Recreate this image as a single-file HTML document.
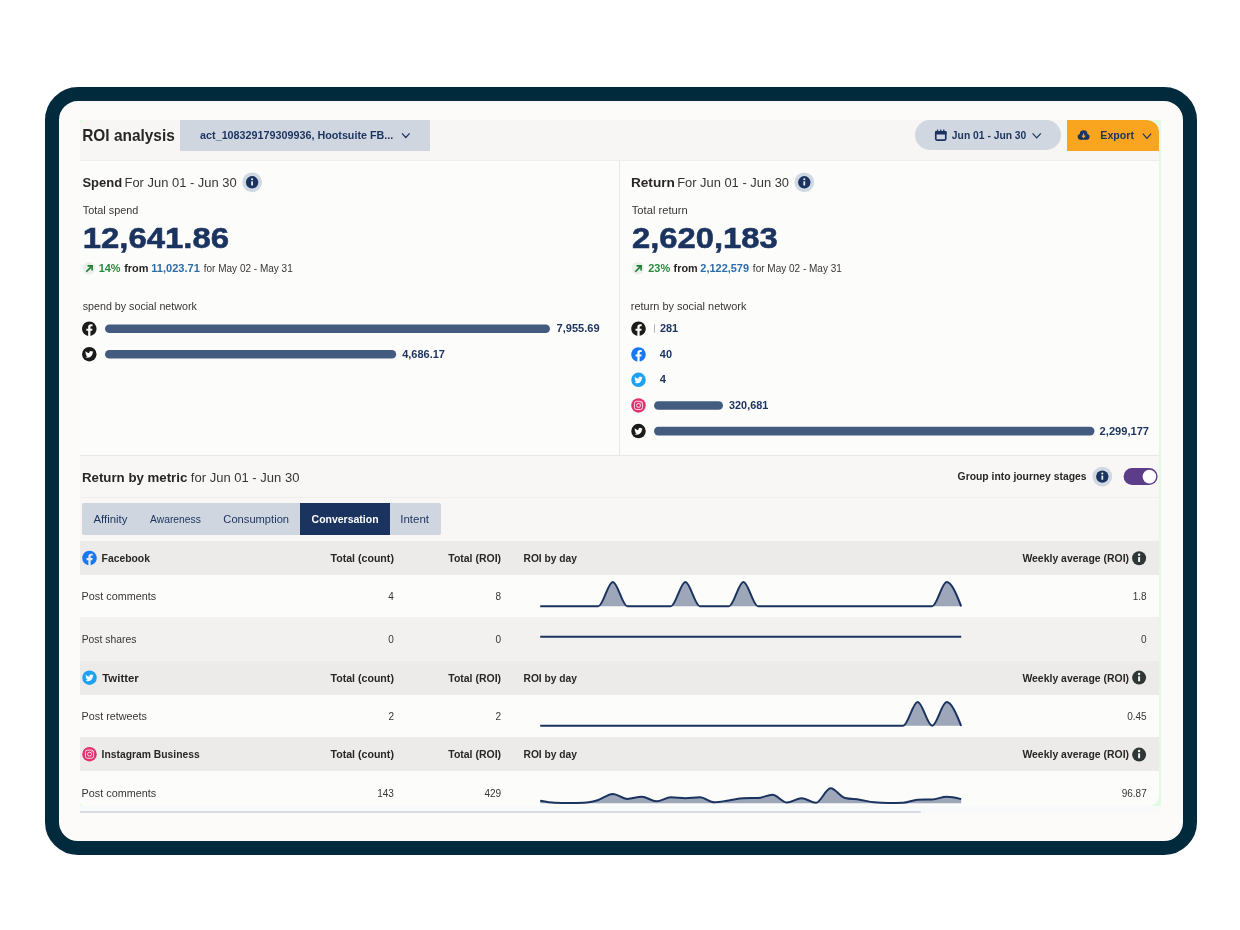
<!DOCTYPE html>
<html><head><meta charset="utf-8"><title>ROI analysis</title>
<style>
html,body{margin:0;padding:0;background:#fff;}
body{width:1240px;height:930px;position:relative;overflow:hidden;font-family:"Liberation Sans", sans-serif;}
.a{position:absolute;}
.t{position:absolute;white-space:pre;line-height:1;transform-origin:0 0;font-family:"Liberation Sans", sans-serif;}
</style></head><body>
<div class="a" style="left:45px;top:87px;width:1124px;height:739.5px;border:14px solid #012b3d;border-radius:33px;background:#fcfbf9;"></div>
<div class="a" style="left:80px;top:120px;width:1081px;height:686px;background:#e0fbe0;"></div>
<div class="a" style="left:80px;top:120px;width:1079px;height:686px;background:#fcfcfa;border-radius:5px 12px 11px 4px;overflow:hidden;">
 <div class="a" style="left:0;top:0;width:1079px;height:40px;background:#f7f6f4;"></div>
 <div class="a" style="left:0;top:40px;width:1079px;height:1px;background:#efeeec;"></div>
 <div class="a" style="left:100px;top:0;width:250px;height:30.8px;background:#cfd6e0;"></div>
 <div class="a" style="left:835px;top:0;width:146px;height:30.2px;background:#d0d7e0;border-radius:16px;"></div>
 <div class="a" style="left:987px;top:0;width:92px;height:30.7px;background:#f9a51f;border-radius:0 12px 0 0;"></div>
 <div class="a" style="left:539px;top:41px;width:1px;height:295px;background:#e9e8e6;"></div>
 <div class="a" style="left:0;top:335px;width:1079px;height:86px;background:#f8f7f5;"></div>
 <div class="a" style="left:0;top:335px;width:1079px;height:1px;background:#e9e8e6;"></div>
 <div class="a" style="left:0;top:377px;width:1079px;height:1px;background:#f0efed;"></div>
 <div class="a" style="left:2px;top:383px;width:359px;height:31.5px;background:#cfd6e0;border-radius:2px;"></div>
 <div class="a" style="left:219.7px;top:383px;width:90.3px;height:31.5px;background:#1b335f;"></div>
 <div class="a" style="left:0;top:420.6px;width:1079px;height:34px;background:#ecebe9;"></div>
 <div class="a" style="left:0;top:497.3px;width:1079px;height:43.3px;background:#f2f1ef;"></div>
 <div class="a" style="left:0;top:540.6px;width:1079px;height:34px;background:#ecebe9;"></div>
 <div class="a" style="left:0;top:617.4px;width:1079px;height:34px;background:#ecebe9;"></div>
</div>
<div class="a" style="left:80px;top:805.5px;width:1081px;height:7px;background:#f8f9fb;"></div>
<div class="a" style="left:80px;top:810.6px;width:841px;height:2px;background:#d8dce2;border-radius:0 2px 2px 0;"></div>
<svg class="a" style="left:0;top:0;will-change:transform" width="1240" height="930" viewBox="0 0 1240 930">
<rect x="105" y="324.40" width="445.00" height="8.6" rx="4.3" fill="#445b80"/>
<rect x="105" y="350.00" width="291.20" height="8.6" rx="4.3" fill="#445b80"/>
<rect x="654" y="401.20" width="69.00" height="8.6" rx="4.3" fill="#445b80"/>
<rect x="654" y="426.80" width="440.50" height="8.6" rx="4.3" fill="#445b80"/>
<rect x="654.15" y="324.3" width="0.8" height="8.4" fill="#98a2b6"/>
<g transform="translate(82.05,321.45) scale(0.6042)"><path d="M24 12.073c0-6.627-5.373-12-12-12s-12 5.373-12 12c0 5.99 4.388 10.954 10.125 11.854v-8.385H7.078v-3.47h3.047V9.43c0-3.007 1.792-4.669 4.533-4.669 1.312 0 2.686.235 2.686.235v2.953H15.83c-1.491 0-1.956.925-1.956 1.874v2.25h3.328l-.532 3.47h-2.796v8.385C19.612 23.027 24 18.062 24 12.073z" fill="#1c1b1b"/></g>
<circle cx="89.3" cy="354.2" r="7.25" fill="#1c1b1b"/><g transform="translate(85.09,350.14) scale(0.3504)"><path d="M23.953 4.57a10 10 0 01-2.825.775 4.958 4.958 0 002.163-2.723c-.951.555-2.005.959-3.127 1.184a4.92 4.92 0 00-8.384 4.482C7.69 8.095 4.067 6.13 1.64 3.162a4.822 4.822 0 00-.666 2.475c0 1.71.87 3.213 2.188 4.096a4.904 4.904 0 01-2.228-.616v.06a4.923 4.923 0 003.946 4.827 4.996 4.996 0 01-2.212.085 4.936 4.936 0 004.604 3.417 9.867 9.867 0 01-6.102 2.105c-.39 0-.779-.023-1.17-.067a13.995 13.995 0 007.557 2.209c9.053 0 13.998-7.496 13.998-13.985 0-.21 0-.42-.015-.63A9.935 9.935 0 0024 4.59z" fill="#fff"/></g>
<g transform="translate(631.25,321.35) scale(0.6042)"><path d="M24 12.073c0-6.627-5.373-12-12-12s-12 5.373-12 12c0 5.99 4.388 10.954 10.125 11.854v-8.385H7.078v-3.47h3.047V9.43c0-3.007 1.792-4.669 4.533-4.669 1.312 0 2.686.235 2.686.235v2.953H15.83c-1.491 0-1.956.925-1.956 1.874v2.25h3.328l-.532 3.47h-2.796v8.385C19.612 23.027 24 18.062 24 12.073z" fill="#1c1b1b"/></g>
<g transform="translate(631.25,347.15) scale(0.6042)"><path d="M24 12.073c0-6.627-5.373-12-12-12s-12 5.373-12 12c0 5.99 4.388 10.954 10.125 11.854v-8.385H7.078v-3.47h3.047V9.43c0-3.007 1.792-4.669 4.533-4.669 1.312 0 2.686.235 2.686.235v2.953H15.83c-1.491 0-1.956.925-1.956 1.874v2.25h3.328l-.532 3.47h-2.796v8.385C19.612 23.027 24 18.062 24 12.073z" fill="#1877f2"/></g>
<circle cx="638.5" cy="379.8" r="7.25" fill="#1da1f2"/><g transform="translate(634.29,375.74) scale(0.3504)"><path d="M23.953 4.57a10 10 0 01-2.825.775 4.958 4.958 0 002.163-2.723c-.951.555-2.005.959-3.127 1.184a4.92 4.92 0 00-8.384 4.482C7.69 8.095 4.067 6.13 1.64 3.162a4.822 4.822 0 00-.666 2.475c0 1.71.87 3.213 2.188 4.096a4.904 4.904 0 01-2.228-.616v.06a4.923 4.923 0 003.946 4.827 4.996 4.996 0 01-2.212.085 4.936 4.936 0 004.604 3.417 9.867 9.867 0 01-6.102 2.105c-.39 0-.779-.023-1.17-.067a13.995 13.995 0 007.557 2.209c9.053 0 13.998-7.496 13.998-13.985 0-.21 0-.42-.015-.63A9.935 9.935 0 0024 4.59z" fill="#fff"/></g>
<circle cx="638.5" cy="405.4" r="7.25" fill="#e0306f"/><rect x="634.4" y="401.29999999999995" width="8.2" height="8.2" rx="2.2" fill="none" stroke="#fff" stroke-width="0.9" stroke-opacity="0.9"/><circle cx="638.5" cy="405.4" r="2" fill="none" stroke="#fff" stroke-width="0.9" stroke-opacity="0.9"/><circle cx="641.0" cy="402.9" r="0.55" fill="#fff"/>
<circle cx="638.5" cy="431.1" r="7.25" fill="#1c1b1b"/><g transform="translate(634.29,427.04) scale(0.3504)"><path d="M23.953 4.57a10 10 0 01-2.825.775 4.958 4.958 0 002.163-2.723c-.951.555-2.005.959-3.127 1.184a4.92 4.92 0 00-8.384 4.482C7.69 8.095 4.067 6.13 1.64 3.162a4.822 4.822 0 00-.666 2.475c0 1.71.87 3.213 2.188 4.096a4.904 4.904 0 01-2.228-.616v.06a4.923 4.923 0 003.946 4.827 4.996 4.996 0 01-2.212.085 4.936 4.936 0 004.604 3.417 9.867 9.867 0 01-6.102 2.105c-.39 0-.779-.023-1.17-.067a13.995 13.995 0 007.557 2.209c9.053 0 13.998-7.496 13.998-13.985 0-.21 0-.42-.015-.63A9.935 9.935 0 0024 4.59z" fill="#fff"/></g>
<g transform="translate(82.25,550.75) scale(0.6042)"><path d="M24 12.073c0-6.627-5.373-12-12-12s-12 5.373-12 12c0 5.99 4.388 10.954 10.125 11.854v-8.385H7.078v-3.47h3.047V9.43c0-3.007 1.792-4.669 4.533-4.669 1.312 0 2.686.235 2.686.235v2.953H15.83c-1.491 0-1.956.925-1.956 1.874v2.25h3.328l-.532 3.47h-2.796v8.385C19.612 23.027 24 18.062 24 12.073z" fill="#1877f2"/></g>
<circle cx="89.5" cy="677.7" r="7.25" fill="#1da1f2"/><g transform="translate(85.30,673.64) scale(0.3504)"><path d="M23.953 4.57a10 10 0 01-2.825.775 4.958 4.958 0 002.163-2.723c-.951.555-2.005.959-3.127 1.184a4.92 4.92 0 00-8.384 4.482C7.69 8.095 4.067 6.13 1.64 3.162a4.822 4.822 0 00-.666 2.475c0 1.71.87 3.213 2.188 4.096a4.904 4.904 0 01-2.228-.616v.06a4.923 4.923 0 003.946 4.827 4.996 4.996 0 01-2.212.085 4.936 4.936 0 004.604 3.417 9.867 9.867 0 01-6.102 2.105c-.39 0-.779-.023-1.17-.067a13.995 13.995 0 007.557 2.209c9.053 0 13.998-7.496 13.998-13.985 0-.21 0-.42-.015-.63A9.935 9.935 0 0024 4.59z" fill="#fff"/></g>
<circle cx="89.5" cy="754.2" r="7.25" fill="#e0306f"/><rect x="85.4" y="750.1" width="8.2" height="8.2" rx="2.2" fill="none" stroke="#fff" stroke-width="0.9" stroke-opacity="0.9"/><circle cx="89.5" cy="754.2" r="2" fill="none" stroke="#fff" stroke-width="0.9" stroke-opacity="0.9"/><circle cx="92.0" cy="751.7" r="0.55" fill="#fff"/>
<circle cx="252.1" cy="182.3" r="9.9" fill="#d0d8e3"/><circle cx="252.1" cy="182.3" r="6.2" fill="#1b335f"/><rect x="251.2" y="181.20000000000002" width="1.8" height="4.3" rx="0.5" fill="#e8ecf2"/><circle cx="252.1" cy="179.20000000000002" r="1.05" fill="#e8ecf2"/>
<circle cx="804.3" cy="182.3" r="9.9" fill="#d0d8e3"/><circle cx="804.3" cy="182.3" r="6.2" fill="#1b335f"/><rect x="803.4" y="181.20000000000002" width="1.8" height="4.3" rx="0.5" fill="#e8ecf2"/><circle cx="804.3" cy="179.20000000000002" r="1.05" fill="#e8ecf2"/>
<circle cx="1102.3" cy="476.6" r="9.9" fill="#d0d8e3"/><circle cx="1102.3" cy="476.6" r="6.2" fill="#1b335f"/><rect x="1101.3999999999999" y="475.5" width="1.8" height="4.3" rx="0.5" fill="#e8ecf2"/><circle cx="1102.3" cy="473.5" r="1.05" fill="#e8ecf2"/>
<circle cx="1139.1" cy="558.3" r="7" fill="#2f3638"/><rect x="1138.1" y="557.0" width="2" height="5" rx="0.4" fill="#f0f0ee"/><circle cx="1139.1" cy="554.6999999999999" r="1.2" fill="#f0f0ee"/>
<circle cx="1139.1" cy="677.6" r="7" fill="#2f3638"/><rect x="1138.1" y="676.3000000000001" width="2" height="5" rx="0.4" fill="#f0f0ee"/><circle cx="1139.1" cy="674.0" r="1.2" fill="#f0f0ee"/>
<circle cx="1139.1" cy="754.6" r="7" fill="#2f3638"/><rect x="1138.1" y="753.3000000000001" width="2" height="5" rx="0.4" fill="#f0f0ee"/><circle cx="1139.1" cy="751.0" r="1.2" fill="#f0f0ee"/>
<circle cx="89" cy="268.3" r="6.3" fill="#e9efeb"/><path d="M86.3,271.8L91.4,266.6" stroke="#1e7a2e" stroke-width="1.6" fill="none"/><path d="M87.6,265.90000000000003H92.1V270.40000000000003" stroke="#1e7a2e" stroke-width="1.6" fill="none"/>
<circle cx="638" cy="268.3" r="6.3" fill="#e9efeb"/><path d="M635.3,271.8L640.4,266.6" stroke="#1e7a2e" stroke-width="1.6" fill="none"/><path d="M636.6,265.90000000000003H641.1V270.40000000000003" stroke="#1e7a2e" stroke-width="1.6" fill="none"/>
<path d="M402,133.31L405.8,137.49L409.6,133.31" stroke="#1b335f" stroke-width="1.2" fill="none"/>
<path d="M1032.6,133.34L1036.6999999999998,137.86L1040.8,133.34" stroke="#1b335f" stroke-width="1.2" fill="none"/>
<path d="M1142.8,133.72L1146.9499999999998,138.28L1151.1,133.72" stroke="#1b335f" stroke-width="1.2" fill="none"/>
<rect x="935.75" y="131.85" width="10" height="8.2" rx="1.2" fill="none" stroke="#1b335f" stroke-width="1.7"/><rect x="935" y="131" width="11.6" height="3.5" rx="0.8" fill="#1b335f"/><rect x="936.9" y="129.6" width="1.3" height="2" fill="#1b335f"/><rect x="940.1" y="129.6" width="1.3" height="2" fill="#1b335f"/><rect x="943.1" y="129.6" width="1.3" height="2" fill="#1b335f"/>
<g fill="#1b335f"><circle cx="1080.5" cy="136.85" r="2.85"/><circle cx="1086.7" cy="136.85" r="2.85"/><circle cx="1083.6" cy="134" r="3.85"/><rect x="1080.5" y="134" width="6.2" height="5.7"/></g><path d="M1083.6,133.4v3.6M1081.9,135.7l1.7,1.7l1.7,-1.7" stroke="#f9a51f" stroke-width="1.15" fill="none"/>
<rect x="1123.6" y="468.1" width="34" height="17" rx="8.5" fill="#5c3d8a"/><circle cx="1149.4" cy="476.6" r="6.8" fill="#fff"/>
<path d="M540.20,606.30C545.04,606.30 549.88,606.30 554.72,606.30C559.56,606.30 564.40,606.30 569.23,606.30C574.07,606.30 578.91,606.30 583.75,606.30C588.59,606.30 593.43,606.30 598.27,606.30C603.11,606.30 607.95,582.00 612.79,582.00C617.62,582.00 622.46,606.30 627.30,606.30C632.14,606.30 636.98,606.30 641.82,606.30C646.66,606.30 651.50,606.30 656.34,606.30C661.18,606.30 666.01,606.30 670.85,606.30C675.69,606.30 680.53,582.00 685.37,582.00C690.21,582.00 695.05,606.30 699.89,606.30C704.73,606.30 709.57,606.30 714.40,606.30C719.24,606.30 724.08,606.30 728.92,606.30C733.76,606.30 738.60,582.00 743.44,582.00C748.28,582.00 753.12,606.30 757.96,606.30C762.79,606.30 767.63,606.30 772.47,606.30C777.31,606.30 782.15,606.30 786.99,606.30C791.83,606.30 796.67,606.30 801.51,606.30C806.35,606.30 811.18,606.30 816.02,606.30C820.86,606.30 825.70,606.30 830.54,606.30C835.38,606.30 840.22,606.30 845.06,606.30C849.90,606.30 854.74,606.30 859.57,606.30C864.41,606.30 869.25,606.30 874.09,606.30C878.93,606.30 883.77,606.30 888.61,606.30C893.45,606.30 898.29,606.30 903.12,606.30C907.96,606.30 912.80,606.30 917.64,606.30C922.48,606.30 927.32,606.30 932.16,606.30C937.00,606.30 941.84,582.00 946.68,582.00C951.51,582.00 956.35,594.15 961.19,606.30L961.19,606.30L540.20,606.30Z" fill="#1b335f" fill-opacity="0.42"/><path d="M540.20,606.30C545.04,606.30 549.88,606.30 554.72,606.30C559.56,606.30 564.40,606.30 569.23,606.30C574.07,606.30 578.91,606.30 583.75,606.30C588.59,606.30 593.43,606.30 598.27,606.30C603.11,606.30 607.95,582.00 612.79,582.00C617.62,582.00 622.46,606.30 627.30,606.30C632.14,606.30 636.98,606.30 641.82,606.30C646.66,606.30 651.50,606.30 656.34,606.30C661.18,606.30 666.01,606.30 670.85,606.30C675.69,606.30 680.53,582.00 685.37,582.00C690.21,582.00 695.05,606.30 699.89,606.30C704.73,606.30 709.57,606.30 714.40,606.30C719.24,606.30 724.08,606.30 728.92,606.30C733.76,606.30 738.60,582.00 743.44,582.00C748.28,582.00 753.12,606.30 757.96,606.30C762.79,606.30 767.63,606.30 772.47,606.30C777.31,606.30 782.15,606.30 786.99,606.30C791.83,606.30 796.67,606.30 801.51,606.30C806.35,606.30 811.18,606.30 816.02,606.30C820.86,606.30 825.70,606.30 830.54,606.30C835.38,606.30 840.22,606.30 845.06,606.30C849.90,606.30 854.74,606.30 859.57,606.30C864.41,606.30 869.25,606.30 874.09,606.30C878.93,606.30 883.77,606.30 888.61,606.30C893.45,606.30 898.29,606.30 903.12,606.30C907.96,606.30 912.80,606.30 917.64,606.30C922.48,606.30 927.32,606.30 932.16,606.30C937.00,606.30 941.84,582.00 946.68,582.00C951.51,582.00 956.35,594.15 961.19,606.30" fill="none" stroke="#1b335f" stroke-width="2" stroke-linejoin="round"/><path d="M540.20,636.80C545.04,636.80 549.88,636.80 554.72,636.80C559.56,636.80 564.40,636.80 569.23,636.80C574.07,636.80 578.91,636.80 583.75,636.80C588.59,636.80 593.43,636.80 598.27,636.80C603.11,636.80 607.95,636.80 612.79,636.80C617.62,636.80 622.46,636.80 627.30,636.80C632.14,636.80 636.98,636.80 641.82,636.80C646.66,636.80 651.50,636.80 656.34,636.80C661.18,636.80 666.01,636.80 670.85,636.80C675.69,636.80 680.53,636.80 685.37,636.80C690.21,636.80 695.05,636.80 699.89,636.80C704.73,636.80 709.57,636.80 714.40,636.80C719.24,636.80 724.08,636.80 728.92,636.80C733.76,636.80 738.60,636.80 743.44,636.80C748.28,636.80 753.12,636.80 757.96,636.80C762.79,636.80 767.63,636.80 772.47,636.80C777.31,636.80 782.15,636.80 786.99,636.80C791.83,636.80 796.67,636.80 801.51,636.80C806.35,636.80 811.18,636.80 816.02,636.80C820.86,636.80 825.70,636.80 830.54,636.80C835.38,636.80 840.22,636.80 845.06,636.80C849.90,636.80 854.74,636.80 859.57,636.80C864.41,636.80 869.25,636.80 874.09,636.80C878.93,636.80 883.77,636.80 888.61,636.80C893.45,636.80 898.29,636.80 903.12,636.80C907.96,636.80 912.80,636.80 917.64,636.80C922.48,636.80 927.32,636.80 932.16,636.80C937.00,636.80 941.84,636.80 946.68,636.80C951.51,636.80 956.35,636.80 961.19,636.80L961.19,636.80L540.20,636.80Z" fill="#1b335f" fill-opacity="0.42"/><path d="M540.20,636.80C545.04,636.80 549.88,636.80 554.72,636.80C559.56,636.80 564.40,636.80 569.23,636.80C574.07,636.80 578.91,636.80 583.75,636.80C588.59,636.80 593.43,636.80 598.27,636.80C603.11,636.80 607.95,636.80 612.79,636.80C617.62,636.80 622.46,636.80 627.30,636.80C632.14,636.80 636.98,636.80 641.82,636.80C646.66,636.80 651.50,636.80 656.34,636.80C661.18,636.80 666.01,636.80 670.85,636.80C675.69,636.80 680.53,636.80 685.37,636.80C690.21,636.80 695.05,636.80 699.89,636.80C704.73,636.80 709.57,636.80 714.40,636.80C719.24,636.80 724.08,636.80 728.92,636.80C733.76,636.80 738.60,636.80 743.44,636.80C748.28,636.80 753.12,636.80 757.96,636.80C762.79,636.80 767.63,636.80 772.47,636.80C777.31,636.80 782.15,636.80 786.99,636.80C791.83,636.80 796.67,636.80 801.51,636.80C806.35,636.80 811.18,636.80 816.02,636.80C820.86,636.80 825.70,636.80 830.54,636.80C835.38,636.80 840.22,636.80 845.06,636.80C849.90,636.80 854.74,636.80 859.57,636.80C864.41,636.80 869.25,636.80 874.09,636.80C878.93,636.80 883.77,636.80 888.61,636.80C893.45,636.80 898.29,636.80 903.12,636.80C907.96,636.80 912.80,636.80 917.64,636.80C922.48,636.80 927.32,636.80 932.16,636.80C937.00,636.80 941.84,636.80 946.68,636.80C951.51,636.80 956.35,636.80 961.19,636.80" fill="none" stroke="#1b335f" stroke-width="2" stroke-linejoin="round"/><path d="M540.20,725.80C545.04,725.80 549.88,725.80 554.72,725.80C559.56,725.80 564.40,725.80 569.23,725.80C574.07,725.80 578.91,725.80 583.75,725.80C588.59,725.80 593.43,725.80 598.27,725.80C603.11,725.80 607.95,725.80 612.79,725.80C617.62,725.80 622.46,725.80 627.30,725.80C632.14,725.80 636.98,725.80 641.82,725.80C646.66,725.80 651.50,725.80 656.34,725.80C661.18,725.80 666.01,725.80 670.85,725.80C675.69,725.80 680.53,725.80 685.37,725.80C690.21,725.80 695.05,725.80 699.89,725.80C704.73,725.80 709.57,725.80 714.40,725.80C719.24,725.80 724.08,725.80 728.92,725.80C733.76,725.80 738.60,725.80 743.44,725.80C748.28,725.80 753.12,725.80 757.96,725.80C762.79,725.80 767.63,725.80 772.47,725.80C777.31,725.80 782.15,725.80 786.99,725.80C791.83,725.80 796.67,725.80 801.51,725.80C806.35,725.80 811.18,725.80 816.02,725.80C820.86,725.80 825.70,725.80 830.54,725.80C835.38,725.80 840.22,725.80 845.06,725.80C849.90,725.80 854.74,725.80 859.57,725.80C864.41,725.80 869.25,725.80 874.09,725.80C878.93,725.80 883.77,725.80 888.61,725.80C893.45,725.80 898.29,725.80 903.12,725.80C907.96,725.80 912.80,702.10 917.64,702.10C922.48,702.10 927.32,725.80 932.16,725.80C937.00,725.80 941.84,702.10 946.68,702.10C951.51,702.10 956.35,713.95 961.19,725.80L961.19,725.80L540.20,725.80Z" fill="#1b335f" fill-opacity="0.42"/><path d="M540.20,725.80C545.04,725.80 549.88,725.80 554.72,725.80C559.56,725.80 564.40,725.80 569.23,725.80C574.07,725.80 578.91,725.80 583.75,725.80C588.59,725.80 593.43,725.80 598.27,725.80C603.11,725.80 607.95,725.80 612.79,725.80C617.62,725.80 622.46,725.80 627.30,725.80C632.14,725.80 636.98,725.80 641.82,725.80C646.66,725.80 651.50,725.80 656.34,725.80C661.18,725.80 666.01,725.80 670.85,725.80C675.69,725.80 680.53,725.80 685.37,725.80C690.21,725.80 695.05,725.80 699.89,725.80C704.73,725.80 709.57,725.80 714.40,725.80C719.24,725.80 724.08,725.80 728.92,725.80C733.76,725.80 738.60,725.80 743.44,725.80C748.28,725.80 753.12,725.80 757.96,725.80C762.79,725.80 767.63,725.80 772.47,725.80C777.31,725.80 782.15,725.80 786.99,725.80C791.83,725.80 796.67,725.80 801.51,725.80C806.35,725.80 811.18,725.80 816.02,725.80C820.86,725.80 825.70,725.80 830.54,725.80C835.38,725.80 840.22,725.80 845.06,725.80C849.90,725.80 854.74,725.80 859.57,725.80C864.41,725.80 869.25,725.80 874.09,725.80C878.93,725.80 883.77,725.80 888.61,725.80C893.45,725.80 898.29,725.80 903.12,725.80C907.96,725.80 912.80,702.10 917.64,702.10C922.48,702.10 927.32,725.80 932.16,725.80C937.00,725.80 941.84,702.10 946.68,702.10C951.51,702.10 956.35,713.95 961.19,725.80" fill="none" stroke="#1b335f" stroke-width="2" stroke-linejoin="round"/><path d="M540.20,800.80C545.04,801.73 549.88,802.67 554.72,802.80C559.56,802.93 564.40,803.00 569.23,803.00C574.07,803.00 578.91,802.93 583.75,802.80C588.59,802.67 593.43,801.48 598.27,800.00C603.11,798.52 607.95,793.90 612.79,793.90C617.62,793.90 622.46,798.90 627.30,798.90C632.14,798.90 636.98,796.70 641.82,796.70C646.66,796.70 651.50,801.30 656.34,801.30C661.18,801.30 666.01,797.30 670.85,797.30C675.69,797.30 680.53,798.20 685.37,798.20C690.21,798.20 695.05,797.30 699.89,797.30C704.73,797.30 709.57,802.30 714.40,802.30C719.24,802.30 724.08,801.08 728.92,800.40C733.76,799.72 738.60,798.33 743.44,798.20C748.28,798.07 753.12,798.13 757.96,798.00C762.79,797.87 767.63,794.80 772.47,794.80C777.31,794.80 782.15,802.60 786.99,802.60C791.83,802.60 796.67,798.20 801.51,798.20C806.35,798.20 811.18,802.80 816.02,802.80C820.86,802.80 825.70,788.30 830.54,788.30C835.38,788.30 840.22,796.87 845.06,798.00C849.90,799.13 854.74,798.98 859.57,799.70C864.41,800.42 869.25,801.83 874.09,802.30C878.93,802.77 883.77,803.00 888.61,803.00C893.45,803.00 898.29,802.93 903.12,802.80C907.96,802.67 912.80,799.83 917.64,799.70C922.48,799.57 927.32,799.63 932.16,799.50C937.00,799.37 941.84,796.70 946.68,796.70C951.51,796.70 956.35,797.90 961.19,799.10L961.19,803.30L540.20,803.30Z" fill="#1b335f" fill-opacity="0.42"/><path d="M540.20,800.80C545.04,801.73 549.88,802.67 554.72,802.80C559.56,802.93 564.40,803.00 569.23,803.00C574.07,803.00 578.91,802.93 583.75,802.80C588.59,802.67 593.43,801.48 598.27,800.00C603.11,798.52 607.95,793.90 612.79,793.90C617.62,793.90 622.46,798.90 627.30,798.90C632.14,798.90 636.98,796.70 641.82,796.70C646.66,796.70 651.50,801.30 656.34,801.30C661.18,801.30 666.01,797.30 670.85,797.30C675.69,797.30 680.53,798.20 685.37,798.20C690.21,798.20 695.05,797.30 699.89,797.30C704.73,797.30 709.57,802.30 714.40,802.30C719.24,802.30 724.08,801.08 728.92,800.40C733.76,799.72 738.60,798.33 743.44,798.20C748.28,798.07 753.12,798.13 757.96,798.00C762.79,797.87 767.63,794.80 772.47,794.80C777.31,794.80 782.15,802.60 786.99,802.60C791.83,802.60 796.67,798.20 801.51,798.20C806.35,798.20 811.18,802.80 816.02,802.80C820.86,802.80 825.70,788.30 830.54,788.30C835.38,788.30 840.22,796.87 845.06,798.00C849.90,799.13 854.74,798.98 859.57,799.70C864.41,800.42 869.25,801.83 874.09,802.30C878.93,802.77 883.77,803.00 888.61,803.00C893.45,803.00 898.29,802.93 903.12,802.80C907.96,802.67 912.80,799.83 917.64,799.70C922.48,799.57 927.32,799.63 932.16,799.50C937.00,799.37 941.84,796.70 946.68,796.70C951.51,796.70 956.35,797.90 961.19,799.10" fill="none" stroke="#1b335f" stroke-width="2" stroke-linejoin="round"/>
<g font-family="Liberation Sans, sans-serif" style="white-space:pre">
<text transform="translate(82.18,141) scale(0.9767,1)" font-size="15.8" font-weight="700" fill="#2a2627">ROI analysis</text>
<text transform="translate(200.09,139) scale(1.0261,1)" font-size="10.5" font-weight="700" fill="#1b335f">act_108329179309936, Hootsuite FB...</text>
<text transform="translate(951.85,139) scale(1.0120,1)" font-size="10.2" font-weight="700" fill="#1b335f">Jun 01 - Jun 30</text>
<text transform="translate(1100.29,139) scale(1.0683,1)" font-size="10" font-weight="700" fill="#1b335f">Export</text>
<text transform="translate(82.44,187) scale(0.9773,1)" font-size="13.3" font-weight="700" fill="#2a2627">Spend</text>
<text transform="translate(124.54,187) scale(0.9725,1)" font-size="13.3" font-weight="400" fill="#393536">For Jun 01 - Jun 30</text>
<text transform="translate(82.76,214) scale(1.0877,1)" font-size="10" font-weight="400" fill="#393536">Total spend</text>
<text transform="translate(82.76,248) scale(1.0860,1)" font-size="30.3" font-weight="700" fill="#1b335f" stroke="#1b335f" stroke-width="0.6">12,641.86</text>
<text transform="translate(98.72,272) scale(1.0405,1)" font-size="10.5" font-weight="700" fill="#2a8a3c">14%</text>
<text transform="translate(124.21,272) scale(1.0394,1)" font-size="10.5" font-weight="700" fill="#2a2627">from</text>
<text transform="translate(151.21,272) scale(1.0555,1)" font-size="10.5" font-weight="700" fill="#2d6ca8">11,023.71</text>
<text transform="translate(203.76,272) scale(0.9535,1)" font-size="10.5" font-weight="400" fill="#393536">for May 02 - May 31</text>
<text transform="translate(82.71,310) scale(0.9734,1)" font-size="11" font-weight="400" fill="#393536">spend by social network</text>
<text transform="translate(556.54,332) scale(1.0538,1)" font-size="10.5" font-weight="700" fill="#1b335f">7,955.69</text>
<text transform="translate(402.13,358) scale(1.0507,1)" font-size="10.5" font-weight="700" fill="#1b335f">4,686.17</text>
<text transform="translate(630.90,187) scale(1.0279,1)" font-size="13.3" font-weight="700" fill="#2a2627">Return</text>
<text transform="translate(677.14,187) scale(0.9707,1)" font-size="13.3" font-weight="400" fill="#393536">For Jun 01 - Jun 30</text>
<text transform="translate(631.75,214) scale(1.1188,1)" font-size="10" font-weight="400" fill="#393536">Total return</text>
<text transform="translate(631.99,248) scale(1.0820,1)" font-size="30.3" font-weight="700" fill="#1b335f" stroke="#1b335f" stroke-width="0.6">2,620,183</text>
<text transform="translate(648.23,272) scale(1.0451,1)" font-size="10.5" font-weight="700" fill="#2a8a3c">23%</text>
<text transform="translate(673.62,272) scale(1.0306,1)" font-size="10.5" font-weight="700" fill="#2a2627">from</text>
<text transform="translate(700.33,272) scale(1.0439,1)" font-size="10.5" font-weight="700" fill="#2d6ca8">2,122,579</text>
<text transform="translate(752.86,272) scale(0.9545,1)" font-size="10.5" font-weight="400" fill="#393536">for May 02 - May 31</text>
<text transform="translate(630.78,310) scale(0.9961,1)" font-size="11" font-weight="400" fill="#393536">return by social network</text>
<text transform="translate(659.93,332) scale(1.0371,1)" font-size="10.5" font-weight="700" fill="#1b335f">281</text>
<text transform="translate(659.84,358) scale(1.0452,1)" font-size="10.5" font-weight="700" fill="#1b335f">40</text>
<text transform="translate(659.83,383) scale(1.0661,1)" font-size="10.5" font-weight="700" fill="#1b335f">4</text>
<text transform="translate(729.06,409) scale(1.0336,1)" font-size="10.5" font-weight="700" fill="#1b335f">320,681</text>
<text transform="translate(1099.62,435) scale(1.0587,1)" font-size="10.5" font-weight="700" fill="#1b335f">2,299,177</text>
<text transform="translate(82.02,482) scale(0.9979,1)" font-size="13.3" font-weight="700" fill="#2a2627">Return by metric</text>
<text transform="translate(190.82,482) scale(0.9800,1)" font-size="13.3" font-weight="400" fill="#393536">for Jun 01 - Jun 30</text>
<text transform="translate(957.57,480) scale(1.0066,1)" font-size="10.3" font-weight="700" fill="#2a2627">Group into journey stages</text>
<text transform="translate(93.48,523) scale(1.0838,1)" font-size="10.5" font-weight="400" fill="#1b335f">Affinity</text>
<text transform="translate(149.98,523) scale(0.9853,1)" font-size="10.5" font-weight="400" fill="#1b335f">Awareness</text>
<text transform="translate(223.34,523) scale(1.0631,1)" font-size="10.5" font-weight="400" fill="#1b335f">Consumption</text>
<text transform="translate(311.57,523) scale(0.9998,1)" font-size="10.5" font-weight="700" fill="#ffffff">Conversation</text>
<text transform="translate(400.24,523) scale(1.0978,1)" font-size="10.5" font-weight="400" fill="#1b335f">Intent</text>
<text transform="translate(101.62,562) scale(0.9867,1)" font-size="10.5" font-weight="700" fill="#2a2627">Facebook</text>
<text transform="translate(330.48,562) scale(1.0119,1)" font-size="10.5" font-weight="700" fill="#2a2627">Total (count)</text>
<text transform="translate(448.28,562) scale(0.9991,1)" font-size="10.5" font-weight="700" fill="#2a2627">Total (ROI)</text>
<text transform="translate(523.52,562) scale(0.9760,1)" font-size="10.5" font-weight="700" fill="#2a2627">ROI by day</text>
<text transform="translate(1022.39,562) scale(0.9956,1)" font-size="10.5" font-weight="700" fill="#2a2627">Weekly average (ROI)</text>
<text transform="translate(102.17,682) scale(1.0908,1)" font-size="10.5" font-weight="700" fill="#2a2627">Twitter</text>
<text transform="translate(330.48,682) scale(1.0119,1)" font-size="10.5" font-weight="700" fill="#2a2627">Total (count)</text>
<text transform="translate(448.28,682) scale(0.9991,1)" font-size="10.5" font-weight="700" fill="#2a2627">Total (ROI)</text>
<text transform="translate(523.52,682) scale(0.9760,1)" font-size="10.5" font-weight="700" fill="#2a2627">ROI by day</text>
<text transform="translate(1022.39,682) scale(0.9956,1)" font-size="10.5" font-weight="700" fill="#2a2627">Weekly average (ROI)</text>
<text transform="translate(101.62,758) scale(0.9841,1)" font-size="10.5" font-weight="700" fill="#2a2627">Instagram Business</text>
<text transform="translate(330.48,758) scale(1.0119,1)" font-size="10.5" font-weight="700" fill="#2a2627">Total (count)</text>
<text transform="translate(448.28,758) scale(0.9991,1)" font-size="10.5" font-weight="700" fill="#2a2627">Total (ROI)</text>
<text transform="translate(523.52,758) scale(0.9760,1)" font-size="10.5" font-weight="700" fill="#2a2627">ROI by day</text>
<text transform="translate(1022.39,758) scale(0.9956,1)" font-size="10.5" font-weight="700" fill="#2a2627">Weekly average (ROI)</text>
<text transform="translate(81.61,600) scale(1.0822,1)" font-size="10" font-weight="400" fill="#393536">Post comments</text>
<text transform="translate(388.23,600) scale(1.0000,1)" font-size="10" font-weight="400" fill="#393536">4</text>
<text transform="translate(495.47,600) scale(1.0000,1)" font-size="10" font-weight="400" fill="#393536">8</text>
<text transform="translate(1132.73,600) scale(1.0000,1)" font-size="10" font-weight="400" fill="#393536">1.8</text>
<text transform="translate(81.65,643) scale(1.0364,1)" font-size="10" font-weight="400" fill="#393536">Post shares</text>
<text transform="translate(388.32,643) scale(1.0000,1)" font-size="10" font-weight="400" fill="#393536">0</text>
<text transform="translate(495.42,643) scale(1.0000,1)" font-size="10" font-weight="400" fill="#393536">0</text>
<text transform="translate(1141.02,643) scale(1.0000,1)" font-size="10" font-weight="400" fill="#393536">0</text>
<text transform="translate(81.62,720) scale(1.0774,1)" font-size="10" font-weight="400" fill="#393536">Post retweets</text>
<text transform="translate(388.44,720) scale(1.0000,1)" font-size="10" font-weight="400" fill="#393536">2</text>
<text transform="translate(495.54,720) scale(1.0000,1)" font-size="10" font-weight="400" fill="#393536">2</text>
<text transform="translate(1127.15,720) scale(1.0000,1)" font-size="10" font-weight="400" fill="#393536">0.45</text>
<text transform="translate(81.61,797) scale(1.0822,1)" font-size="10" font-weight="400" fill="#393536">Post comments</text>
<text transform="translate(377.25,797) scale(1.0000,1)" font-size="10" font-weight="400" fill="#393536">143</text>
<text transform="translate(484.39,797) scale(1.0000,1)" font-size="10" font-weight="400" fill="#393536">429</text>
<text transform="translate(1121.68,797) scale(1.0000,1)" font-size="10" font-weight="400" fill="#393536">96.87</text>
</g>
</svg>
</body></html>
